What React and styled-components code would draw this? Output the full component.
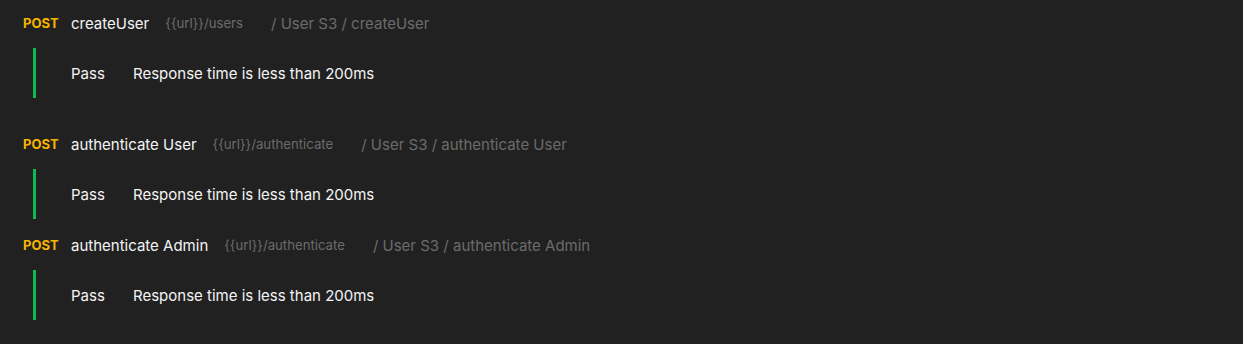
import styled, { createGlobalStyle } from "styled-components";

const Global = createGlobalStyle`
    body {
        margin: 0;
        background: #212121;
        font-family: Inter, "Noto Sans", sans-serif;
    }
`;

const List = styled.div`
    padding: 13px 0 0 23px;
    height: 344px;
    box-sizing: border-box;
    background: #212121;
`;
const Block = styled.div`
    display: flex;
    flex-direction: column;
    margin-bottom: ${p => p.$gap}px;
`;
const Header = styled.div`
    display: flex;
    align-items: center;
    height: 20px;
    white-space: nowrap;
`;
const Method = styled.span`
    color: #f7b500;
    font-size: 13px;
    font-weight: 700;
    width: 48px;
`;
const Name = styled.span`
    color: #f4f4f4;
    font-size: 15px;
    margin-right: 16px;
`;
const Url = styled.span`
    color: #6b6b6b;
    font-size: 13.2px;
    margin-right: 28px;
`;
const Crumb = styled.span`
    color: #6b6b6b;
    font-size: 15px;
`;
const Result = styled.div`
    display: flex;
    align-items: center;
    margin: 15px 0 0 10px;
    padding: 1px 0 0 35px;
    height: 50px;
    box-sizing: border-box;
    border-left: 3px solid #0cbb52;
    font-size: 15px;
    color: #f4f4f4;
`;
const Status = styled.span`
    width: 62px;
`;

const requests = [
    { name: "createUser", url: "{{url}}/users", gap: 36 },
    { name: "authenticate User", url: "{{url}}/authenticate", gap: 16 },
    { name: "authenticate Admin", url: "{{url}}/authenticate", gap: 0 },
];

export default function App() {
    return <>
        <Global />
        <List>
            {requests.map(r => (
                <Block key={r.name} $gap={r.gap}>
                    <Header>
                        <Method>POST</Method>
                        <Name>{r.name}</Name>
                        <Url>{r.url}</Url>
                        <Crumb>/ User S3 / {r.name}</Crumb>
                    </Header>
                    <Result>
                        <Status>Pass</Status>
                        Response time is less than 200ms
                    </Result>
                </Block>
            ))}
        </List>
    </>;
}
